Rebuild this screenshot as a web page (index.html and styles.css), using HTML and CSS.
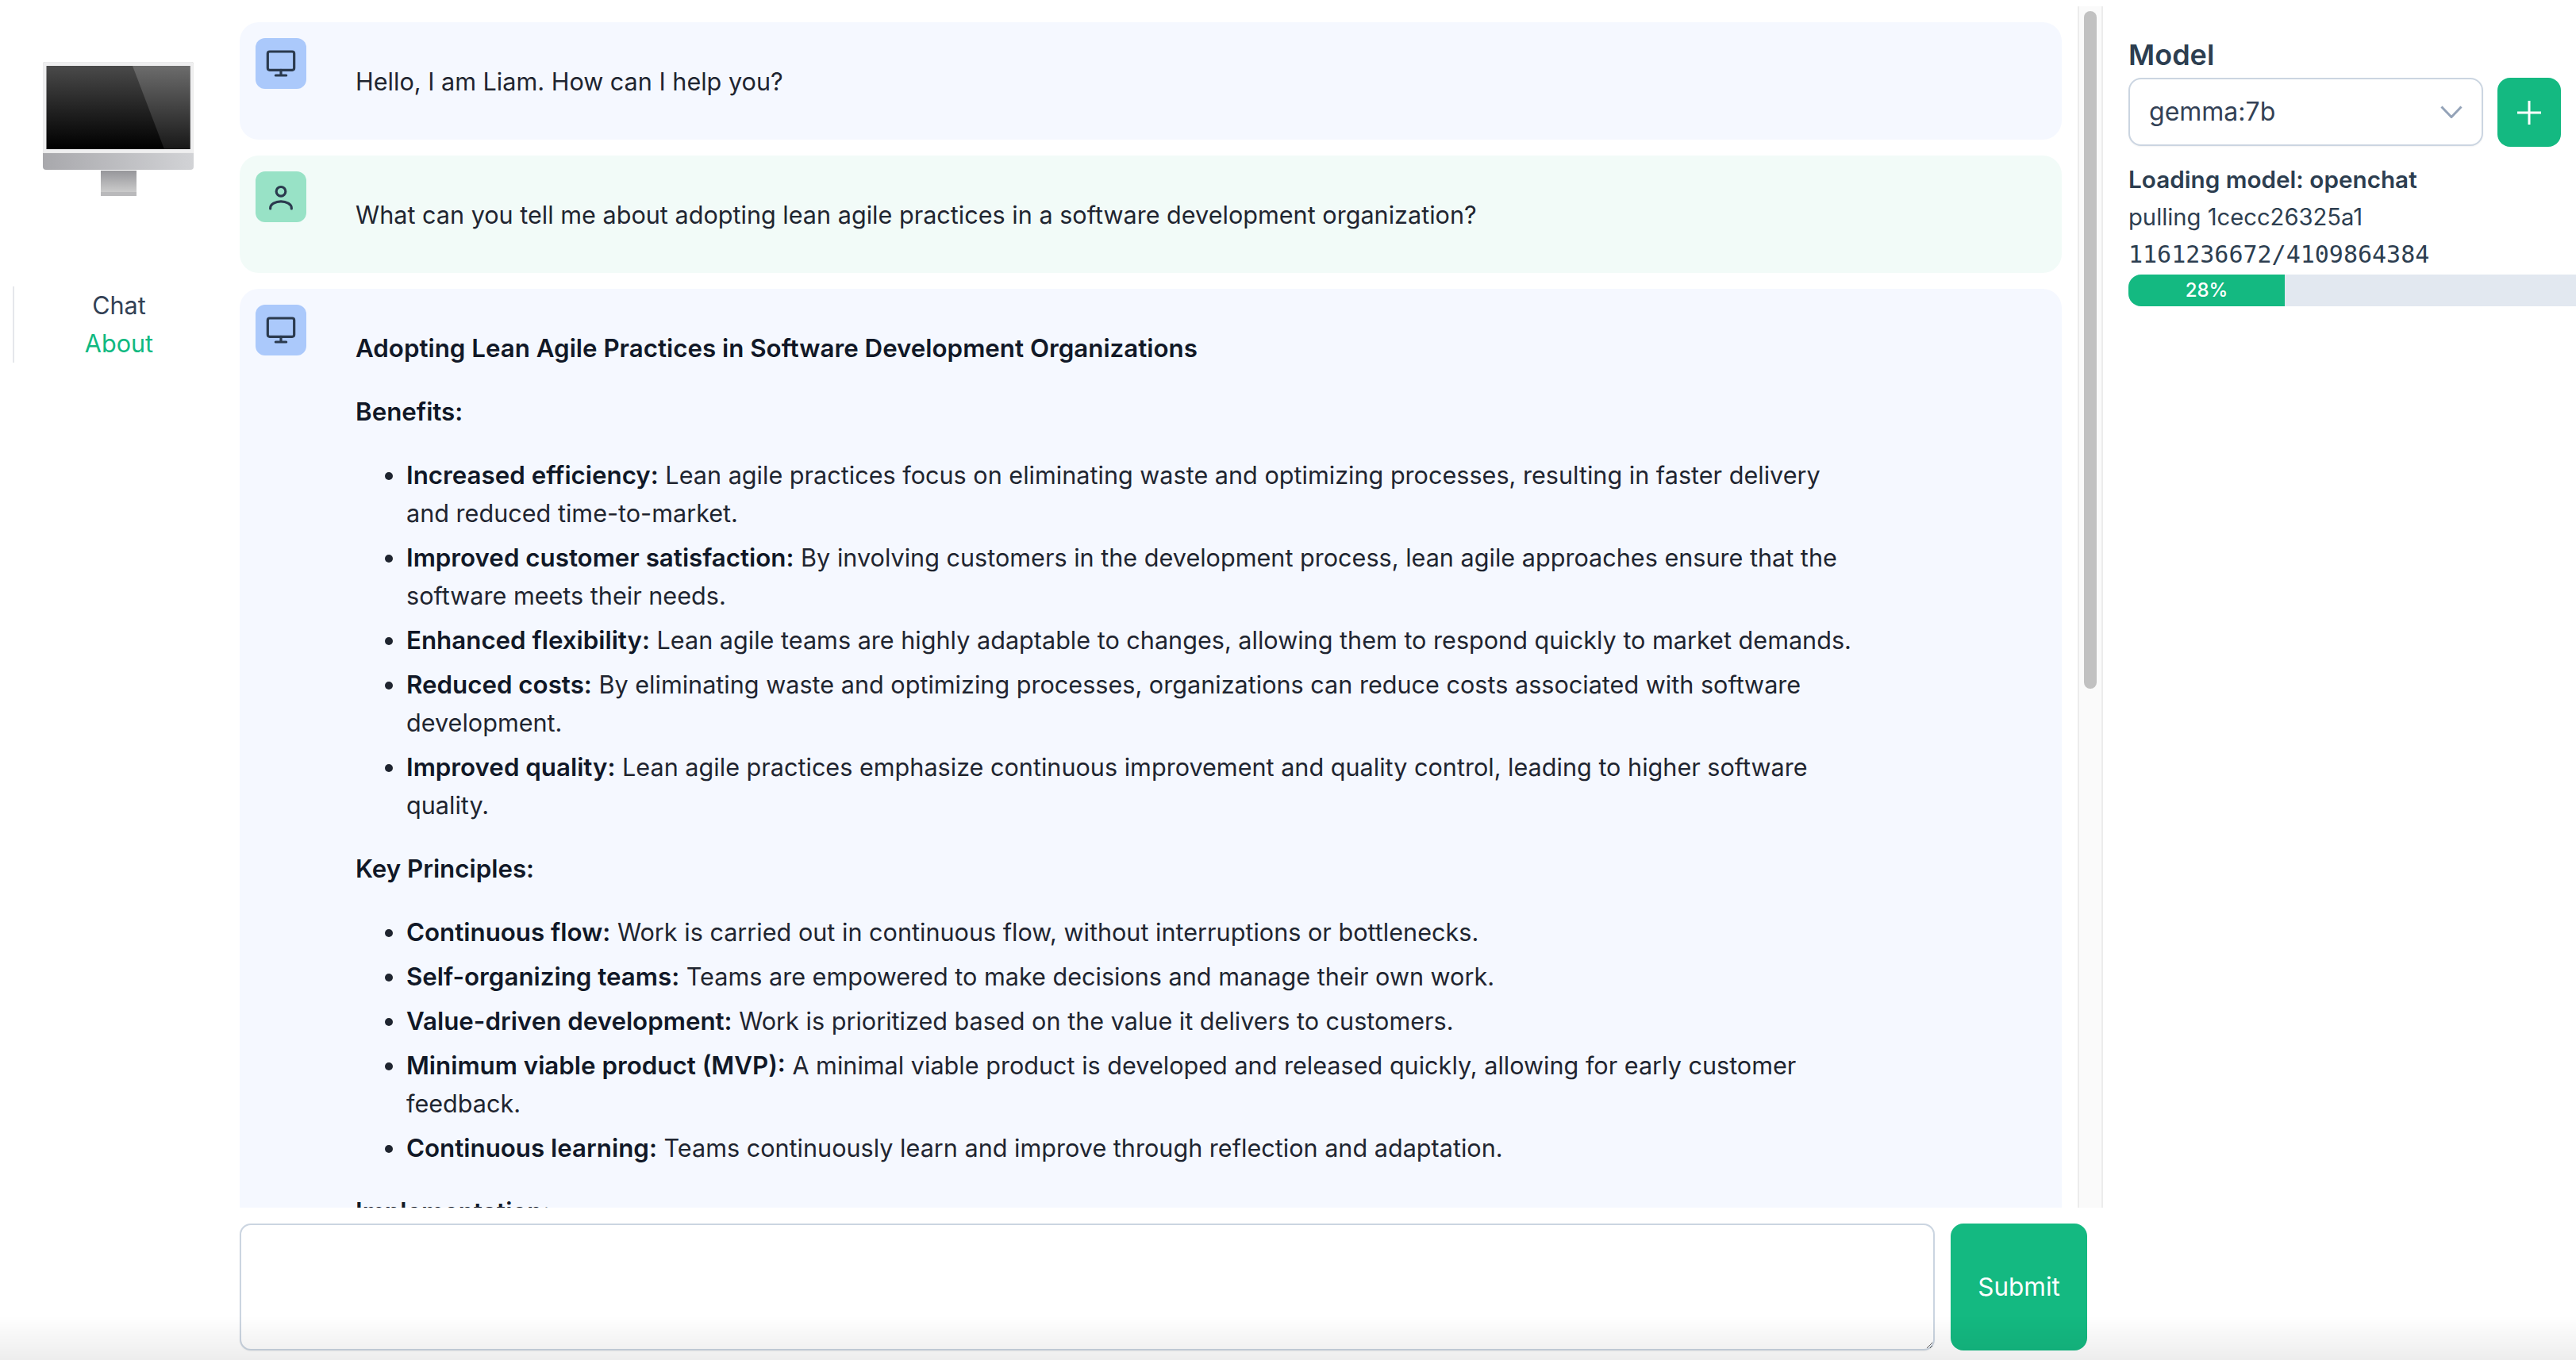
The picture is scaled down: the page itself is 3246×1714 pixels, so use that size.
FILE: index.html
```html
<!DOCTYPE html>
<html lang="en">
<head>
<meta charset="utf-8">
<title>Liam</title>
<link rel="stylesheet" href="styles.css">
</head>
<body>
<div class="app">
  <aside class="nav">
    <svg class="logo" width="190" height="170" viewBox="0 0 190 170" aria-hidden="true">
      <defs>
        <linearGradient id="scr" x1="0" y1="0" x2="0" y2="1"><stop offset="0" stop-color="#4a4a4a"/><stop offset="0.55" stop-color="#202020"/><stop offset="1" stop-color="#000"/></linearGradient>
        <linearGradient id="gl" x1="0" y1="0" x2="0" y2="1"><stop offset="0" stop-color="#6c6c6c"/><stop offset="1" stop-color="#181818"/></linearGradient>
        <linearGradient id="chin" x1="0" y1="0" x2="1" y2="0"><stop offset="0" stop-color="#a8a8ac"/><stop offset="1" stop-color="#d2d3d6"/></linearGradient>
        <linearGradient id="st" x1="0" y1="0" x2="0" y2="1"><stop offset="0" stop-color="#96969a"/><stop offset="1" stop-color="#cdcdcd"/></linearGradient>
      </defs>
      <path d="M3 0H187a3 3 0 0 1 3 3V115H0V3a3 3 0 0 1 3-3Z" fill="#efeff0" stroke="#e6e6e6"/>
      <rect x="4.500" y="5" width="181" height="105" fill="url(#scr)"/>
      <path d="M113 5H185.500V110H153Z" fill="url(#gl)"/>
      <path d="M0 115H190V132a4 4 0 0 1-4 4H4a4 4 0 0 1-4-4Z" fill="url(#chin)"/>
      <rect x="73" y="137" width="45" height="28" fill="url(#st)"/>
      <rect x="73" y="164" width="45" height="5" fill="#b9b9bb"/>
    </svg>
    <ul class="nav-list">
      <li class="nav-item">Chat</li>
      <li class="nav-item nav-item-active">About</li>
    </ul>
  </aside>

  <main class="center">
    <div class="scroll-row">
      <div class="messages">
        <article class="message message-bot">
          <div class="avatar avatar-bot">
            <svg class="avatar-icon" viewBox="0 0 24 24"><rect x="2" y="3" width="20" height="14" rx="1.500"/><path d="M8 21h8M12 17v4"/></svg>
          </div>
          <div class="body"><p>Hello, I am Liam. How can I help you?</p></div>
        </article>
        <article class="message message-user">
          <div class="avatar avatar-user">
            <svg class="avatar-icon" viewBox="0 0 24 24"><circle cx="12" cy="8" r="3.500"/><path d="M4 21v-.5C4 17.500 8 15.500 12 15.500s8 2 8 5v.5"/></svg>
          </div>
          <div class="body"><p>What can you tell me about adopting lean agile practices in a software development organization?</p></div>
        </article>
        <article class="message message-bot">
          <div class="avatar avatar-bot">
            <svg class="avatar-icon" viewBox="0 0 24 24"><rect x="2" y="3" width="20" height="14" rx="1.500"/><path d="M8 21h8M12 17v4"/></svg>
          </div>
          <div class="body">
            <p><strong>Adopting Lean Agile Practices in Software Development Organizations</strong></p>
            <p><strong>Benefits:</strong></p>
            <ul>
              <li><strong>Increased efficiency:</strong> Lean agile practices focus on eliminating waste and optimizing processes, resulting in faster delivery and reduced time-to-market.</li>
              <li><strong>Improved customer satisfaction:</strong> By involving customers in the development process, lean agile approaches ensure that the software meets their needs.</li>
              <li><strong>Enhanced flexibility:</strong> Lean agile teams are highly adaptable to changes, allowing them to respond quickly to market demands.</li>
              <li><strong>Reduced costs:</strong> By eliminating waste and optimizing processes, organizations can reduce costs associated with software development.</li>
              <li><strong>Improved quality:</strong> Lean agile practices emphasize continuous improvement and quality control, leading to higher software quality.</li>
            </ul>
            <p><strong>Key Principles:</strong></p>
            <ul>
              <li><strong>Continuous flow:</strong> Work is carried out in continuous flow, without interruptions or bottlenecks.</li>
              <li><strong>Self-organizing teams:</strong> Teams are empowered to make decisions and manage their own work.</li>
              <li><strong>Value-driven development:</strong> Work is prioritized based on the value it delivers to customers.</li>
              <li><strong>Minimum viable product (MVP):</strong> A minimal viable product is developed and released quickly, allowing for early customer feedback.</li>
              <li><strong>Continuous learning:</strong> Teams continuously learn and improve through reflection and adaptation.</li>
            </ul>
            <p><strong>Implementation:</strong></p>
          </div>
        </article>
      </div>
      <div class="scrollbar"><div class="scrollbar-thumb"></div></div>
    </div>
    <form class="composer">
      <textarea class="composer-input" aria-label="Message"></textarea>
      <button class="composer-submit" type="button">Submit</button>
    </form>
  </main>

  <aside class="panel">
    <h2 class="panel-title">Model</h2>
    <div class="model-row">
      <div class="select-wrap">
        <select class="model-select" aria-label="Model"><option>gemma:7b</option></select>
        <svg class="select-chevron" viewBox="0 0 28 16"><path d="M1.500 1.500 14 14.500 26.500 1.500"/></svg>
      </div>
      <button class="add-btn" type="button" aria-label="Add model">
        <svg class="add-icon" viewBox="0 0 30 30"><path d="M15 0v30M0 15h30"/></svg>
      </button>
    </div>
    <p class="loading-title">Loading model: openchat</p>
    <p class="loading-status">pulling 1cecc26325a1</p>
    <p class="loading-bytes">1161236672/4109864384</p>
    <div class="progress"><div class="progress-fill" style="width: 197px">28%</div></div>
  </aside>
</div>
<div class="window-shade"></div>
</body>
</html>
```

FILE: styles.css
```css
* { box-sizing: border-box; }
html, body { margin: 0; height: 100%; overflow: hidden; background: #fff; }
body { font-family: Inter, "Noto Sans", sans-serif; font-size: 30.600px; line-height: 48px; color: #1f2937; }

.app { display: flex; height: 1714px; width: 3246px; overflow: hidden; }

.nav { flex: 0 0 302px; padding: 78px 0 0 16px; display: flex; flex-direction: column; }
.logo { display: block; margin-left: 38px; }
.nav-list { list-style: none; margin: 113px 0 0; padding: 0; width: 266px; border-left: 2px solid #e5e7eb; height: 96px; }
.nav-item { text-align: center; color: #334155; height: 48px; }
.nav-item-active { color: #10b981; }

.center { flex: 0 0 2348px; display: flex; flex-direction: column; padding-top: 8px; }
.scroll-row { display: flex; height: 1514px; }
.messages { flex: 1; min-width: 0; overflow: hidden; padding: 20px 20px 0 0; display: flex; flex-direction: column; gap: 20px; }
.message { flex: none; display: flex; gap: 62px; padding: 20px; border-radius: 24px; }
.message-bot { background: #f5f8ff; }
.message-user { background: #f2fbf8; }
.avatar { flex: none; width: 64px; height: 64px; border-radius: 12px; display: flex; align-items: center; justify-content: center; }
.avatar-bot { background: #abc9fb; }
.avatar-user { background: #98e2c6; }
.avatar-icon { width: 40px; height: 40px; fill: none; stroke: #2b3a4e; stroke-width: 1.900; stroke-linecap: round; stroke-linejoin: round; }
.body { padding: 31px 0 29px; width: 1896px; color: #1f2530; }
.body p { margin: 0 0 32px; }
.body p:last-child { margin-bottom: 0; }
.body strong { font-size: 31.300px; font-weight: 600; color: #111827; }
.body ul { margin: 0 0 32px; padding: 0 0 0 64px; }
.body li { margin: 0 0 8px; }
.body li:last-child { margin-bottom: 0; }
.body li::marker { color: #1f2530; }

.scrollbar { flex: 0 0 30px; padding: 6px 6px 0; border-left: 2px solid #ececec; border-right: 2px solid #ececec; background: #fafafa; }
.scrollbar-thumb { width: 16px; height: 854px; border-radius: 8px; background: #c1c1c1; }

.composer { display: flex; gap: 20px; padding: 20px 20px 0 0; }
.composer-input { flex: 0 0 2136px; height: 160px; border: 2px solid #cbd5e1; border-radius: 14px; box-shadow: 0 1px 2px rgba(0,0,0,.05); font: inherit; outline: none; background: #fff; }
.composer-submit { flex: 0 0 172px; height: 160px; border: 0; border-radius: 16px; background: #14b981; color: #fff; font: inherit; font-size: 31.500px; padding: 0; }

.panel { flex: 1; min-width: 0; padding: 44px 0 0 32px; color: #334155; }
.panel-title { margin: 0 0 4px; font-size: 36px; line-height: 50px; font-weight: 600; color: #2d3e50; }
.model-row { display: flex; gap: 18px; }
.select-wrap { position: relative; flex: 0 0 447px; }
.model-select { width: 100%; height: 86px; appearance: none; border: 2px solid #cbd5e1; border-radius: 16px; background: #fff; padding: 0 24px; font: inherit; font-size: 32px; color: #334155; box-shadow: 0 1px 2px rgba(0,0,0,.05); outline: none; }
.select-chevron { position: absolute; right: 26px; top: 35px; width: 28px; height: 16px; fill: none; stroke: #94a3b8; stroke-width: 3; }
.add-btn { flex: 0 0 80px; height: 87px; border: 0; border-radius: 16px; background: #14b981; padding: 0; display: flex; align-items: center; justify-content: center; }
.add-icon { width: 30px; height: 30px; fill: none; stroke: #fff; stroke-width: 3; }
.loading-title { margin: 18px 0 0; font-size: 29.700px; line-height: 46px; font-weight: 600; color: #2d3e50; }
.loading-status { margin: 2px 0 0; font-size: 29.200px; line-height: 46px; color: #2d3e50; }
.loading-bytes { margin: 1px 0 0; font-family: "DejaVu Sans Mono", monospace; font-size: 30px; line-height: 46px; color: #2d3e50; white-space: nowrap; }
.progress { margin-top: 2px; width: 703px; height: 40px; border-radius: 16px; background: #e2e8f0; overflow: hidden; }
.progress-fill { height: 40px; background: #14b981; color: #fff; text-align: center; font-size: 24px; line-height: 40px; font-weight: 500; }

.window-shade { position: fixed; left: 0; right: 0; bottom: 0; height: 56px; background: linear-gradient(to bottom, rgba(0,0,0,0), rgba(0,0,0,.07)); pointer-events: none; }
```
